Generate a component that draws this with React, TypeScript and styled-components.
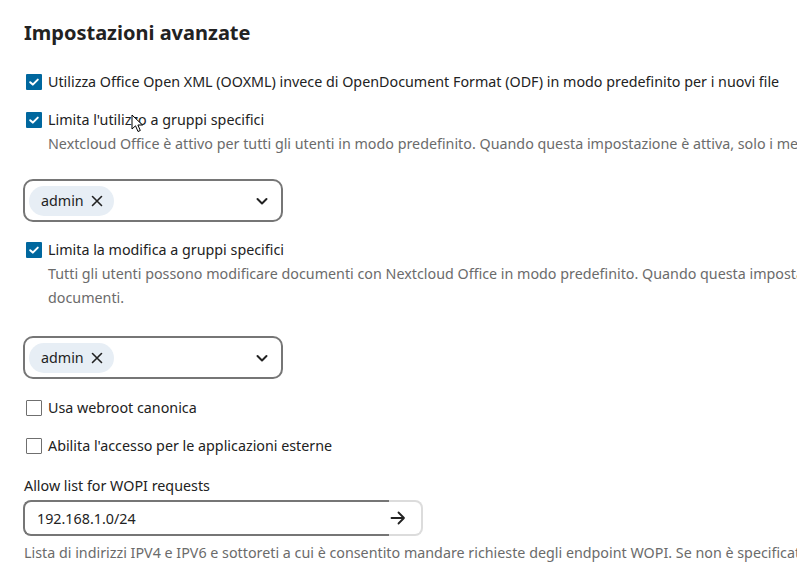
import React from 'react';
import styled, { createGlobalStyle } from 'styled-components';

const FONT = '"Noto Sans", "Open Sans", sans-serif';

const GlobalStyle = createGlobalStyle`
    html, body {
        margin: 0;
        padding: 0;
        background: #ffffff;
        overflow: hidden;
    }
    body {
        font-family: ${FONT};
        color: #222222;
    }
`;

const Page = styled.div`
    position: relative;
    width: 797px;
    height: 569px;
    overflow: hidden;
`;

const Section = styled.section`
    width: 1180px;
    padding: 18px 24px 0 24px;
    box-sizing: border-box;
`;

const Heading = styled.h2`
    margin: 0 0 22px 0;
    font-size: 20px;
    font-weight: 700;
    line-height: 30px;
    color: #222222;
`;

const Setting = styled.div<{ gap?: number }>`
    margin-bottom: ${p => p.gap ?? 15}px;
`;

const CheckRow = styled.label`
    display: flex;
    align-items: center;
    gap: 6px;
    padding-left: 2px;
    font-size: 14.3px;
    line-height: 24px;
    color: #222222;
`;

const Box = styled.span<{ checked?: boolean }>`
    flex: 0 0 auto;
    width: 16px;
    height: 16px;
    box-sizing: border-box;
    border-radius: 1px;
    display: flex;
    align-items: center;
    justify-content: center;
    background: ${p => (p.checked ? '#00679e' : '#ffffff')};
    border: ${p => (p.checked ? 'none' : '1px solid #6f6f6f')};
`;

const Description = styled.p`
    margin: 0;
    padding-left: 24px;
    font-size: 14.3px;
    line-height: 24px;
    color: #6b6b6b;
    white-space: nowrap;
`;

const Select = styled.div<{ offset: number }>`
    margin: ${p => p.offset}px 0 0 -1px;
    width: 260px;
    height: 43px;
    box-sizing: border-box;
    border: 2px solid #767676;
    border-radius: 10px;
    display: flex;
    align-items: center;
    justify-content: space-between;
    padding: 0 12px 0 4px;
`;

const Chip = styled.span`
    display: inline-flex;
    align-items: center;
    gap: 7px;
    height: 30px;
    padding: 0 11px 0 12px;
    border-radius: 15px;
    background: #e7eef5;
    font-size: 14.3px;
    color: #222222;
`;

const FieldLabel = styled.div`
    font-size: 14.3px;
    line-height: 24px;
    color: #222222;
    margin-bottom: 2px;
`;

const Field = styled.div`
    display: flex;
    width: 400px;
    height: 36px;
    margin-left: -1px;
`;

const FieldInput = styled.div`
    flex: 1 1 auto;
    box-sizing: border-box;
    border: 2px solid #767676;
    border-right: none;
    border-radius: 8px 0 0 8px;
    display: flex;
    align-items: center;
    padding-left: 12px;
    font-size: 14.3px;
    color: #222222;
`;

const FieldButton = styled.div`
    flex: 0 0 34px;
    box-sizing: border-box;
    border: 2px solid #dcdcdc;
    border-left: none;
    border-radius: 0 8px 8px 0;
    display: flex;
    align-items: center;
    justify-content: flex-start;
`;

const Hint = styled.p`
    margin: 5px 0 0 0;
    font-size: 14.3px;
    line-height: 24px;
    color: #6b6b6b;
    white-space: nowrap;
`;

const Cursor = styled.svg`
    position: absolute;
    left: 131px;
    top: 114px;
`;

const Tick = () => (
    <svg width="12" height="12" viewBox="0 0 12 12">
        <path d="M2.2 6.2 L4.8 8.6 L9.8 3.6" fill="none" stroke="#ffffff" strokeWidth="2" strokeLinecap="round" strokeLinejoin="round" />
    </svg>
);

const Close = () => (
    <svg width="12" height="12" viewBox="0 0 12 12">
        <path d="M1.5 1.5 L10.5 10.5 M10.5 1.5 L1.5 10.5" stroke="#222" strokeWidth="1.6" strokeLinecap="round" />
    </svg>
);

const Chevron = () => (
    <svg width="14" height="14" viewBox="0 0 14 14">
        <path d="M2.5 5 L7 9.5 L11.5 5" fill="none" stroke="#222" strokeWidth="2" strokeLinecap="round" strokeLinejoin="round" />
    </svg>
);

const Arrow = () => (
    <svg width="18" height="18" viewBox="0 0 18 18">
        <path d="M2.5 9 H15 M9.5 3.5 L15 9 L9.5 14.5" fill="none" stroke="#222" strokeWidth="1.8" strokeLinecap="round" strokeLinejoin="round" />
    </svg>
);

const Check = ({ checked, children }: { checked?: boolean; children: React.ReactNode }) => (
    <CheckRow>
        <Box checked={checked}>{checked && <Tick />}</Box>
        {children}
    </CheckRow>
);

const GroupSelect = ({ offset }: { offset: number }) => (
    <Select offset={offset}>
        <Chip>
            admin
            <Close />
        </Chip>
        <Chevron />
    </Select>
);

export default function App() {
    return (
        <Page>
            <GlobalStyle />
            <Section>
                <Heading>Impostazioni avanzate</Heading>

                <Setting gap={14}>
                    <Check checked>
                        Utilizza Office Open XML (OOXML) invece di OpenDocument Format (ODF) in modo predefinito per i nuovi file
                    </Check>
                </Setting>

                <Setting gap={16}>
                    <Check checked>Limita l'utilizzo a gruppi specifici</Check>
                    <Description>
                        Nextcloud Office è attivo per tutti gli utenti in modo predefinito. Quando questa impostazione è attiva, solo i membri dei gruppi specificati possono usarlo.
                    </Description>
                    <GroupSelect offset={23} />
                </Setting>

                <Setting gap={17}>
                    <Check checked>Limita la modifica a gruppi specifici</Check>
                    <Description>
                        Tutti gli utenti possono modificare documenti con Nextcloud Office in modo predefinito. Quando questa impostazione è attiva, solo i membri dei gruppi specificati possono modificare i
                        <br />
                        documenti.
                    </Description>
                    <GroupSelect offset={26} />
                </Setting>

                <Setting gap={14}>
                    <Check>Usa webroot canonica</Check>
                </Setting>

                <Setting gap={16}>
                    <Check>Abilita l'accesso per le applicazioni esterne</Check>
                </Setting>

                <Setting>
                    <FieldLabel>Allow list for WOPI requests</FieldLabel>
                    <Field>
                        <FieldInput>192.168.1.0/24</FieldInput>
                        <FieldButton>
                            <Arrow />
                        </FieldButton>
                    </Field>
                    <Hint>
                        Lista di indirizzi IPV4 e IPV6 e sottoreti a cui è consentito mandare richieste degli endpoint WOPI. Se non è specificata alcuna lista, tutti gli host saranno ammessi. Es. 10.0.0.20,10.0.4.0/24
                    </Hint>
                </Setting>
            </Section>
            <Cursor width="14" height="20" viewBox="0 0 14 20">
                <path d="M1 1 L1 15 L4.5 11.8 L7 17.5 L9.3 16.5 L6.9 11 L11.5 11 Z" fill="#ffffff" stroke="#000000" strokeWidth="1" strokeLinejoin="round" />
            </Cursor>
        </Page>
    );
}
